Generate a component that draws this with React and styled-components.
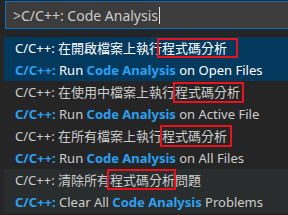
import React from "react";
import styled, { createGlobalStyle } from "styled-components";

const Global = createGlobalStyle`
  html, body { margin: 0; padding: 0; background: #252526; overflow: hidden; }
  #root { width: 288px; height: 215px; overflow: hidden; }
`;

const Widget = styled.div`
  width: 288px;
  height: 215px;
  background: #252526;
  padding: 1px 0 0 4px;
  box-sizing: border-box;
  overflow: hidden;
  font-family: "Noto Sans", "Noto Sans CJK TC", sans-serif;
`;

const InputBox = styled.div`
  margin-left: 1px;
  width: 300px;
  height: 28px;
  box-sizing: border-box;
  background: #3c3c3c;
  border: 1px solid #0e70c0;
  display: flex;
  align-items: center;
  padding-left: 7px;
  color: #cccccc;
  font-size: 14px;
  white-space: nowrap;
`;

const Caret = styled.span`
  display: inline-block;
  width: 1px;
  height: 17px;
  background: #e0e0e0;
  margin-left: 1px;
`;

const List = styled.div`
  margin-top: 8px;
  display: flex;
  flex-direction: column;
`;

const Row = styled.div`
  width: 300px;
  height: 44px;
  box-sizing: border-box;
  padding-left: 11px;
  background: ${(p) => (p.$selected ? "#04395e" : p.$hover ? "#2a2d2e" : "transparent")};
  display: flex;
  flex-direction: column;
`;

const Line = styled.div`
  height: 22px;
  line-height: 22px;
  font-size: 13px;
  white-space: nowrap;
  color: ${(p) => (p.$selected ? "#ffffff" : "#cccccc")};
`;

const Hi = styled.span`
  color: #2aa1f2;
  font-weight: 700;
`;

const Cjk = styled.span`
  font-family: "Noto Sans CJK TC", sans-serif;
  font-size: 13px;
`;

const Boxed = styled.span`
  position: relative;
  &::after {
    content: "";
    position: absolute;
    top: ${(p) => p.$t}px;
    bottom: ${(p) => p.$b}px;
    left: ${(p) => p.$l}px;
    right: ${(p) => p.$r}px;
    border: 2px solid #e8131d;
    pointer-events: none;
  }
`;

const items = [
  { pre: "在開啟檔案上執行", post: "", en: "on Open Files", selected: true, box: { t: -1, b: -1, l: -5, r: -11 } },
  { pre: "在使用中檔案上執行", post: "", en: "on Active File", box: { t: -1, b: -2, l: -2, r: -4 } },
  { pre: "在所有檔案上執行", post: "", en: "on All Files", box: { t: -2, b: -2, l: -2, r: -5 } },
  { pre: "清除所有", post: "問題", en: null, hover: true, box: { t: -2, b: -1, l: -3, r: -1 } },
];

export default function App() {
  return (
    <>
      <Global />
      <Widget>
        <InputBox>
          &gt;C/C++: Code Analysis
          <Caret />
        </InputBox>
        <List>
          {items.map((it, i) => (
            <Row key={i} $selected={it.selected} $hover={it.hover}>
              <Line $selected={it.selected}>
                C/C++: <Cjk>{it.pre}</Cjk>
                <Boxed $t={it.box.t} $b={it.box.b} $l={it.box.l} $r={it.box.r}>
                  <Cjk>程式碼分析</Cjk>
                </Boxed>
                {it.post && <Cjk>{it.post}</Cjk>}
              </Line>
              <Line $selected={it.selected}>
                {it.en ? (
                  <>
                    <Hi>C/C++:</Hi> Run <Hi>Code Analysis</Hi> {it.en}
                  </>
                ) : (
                  <>
                    <Hi>C/C++:</Hi> Clear All <Hi>Code Analysis</Hi> Problems
                  </>
                )}
              </Line>
            </Row>
          ))}
        </List>
      </Widget>
    </>
  );
}
